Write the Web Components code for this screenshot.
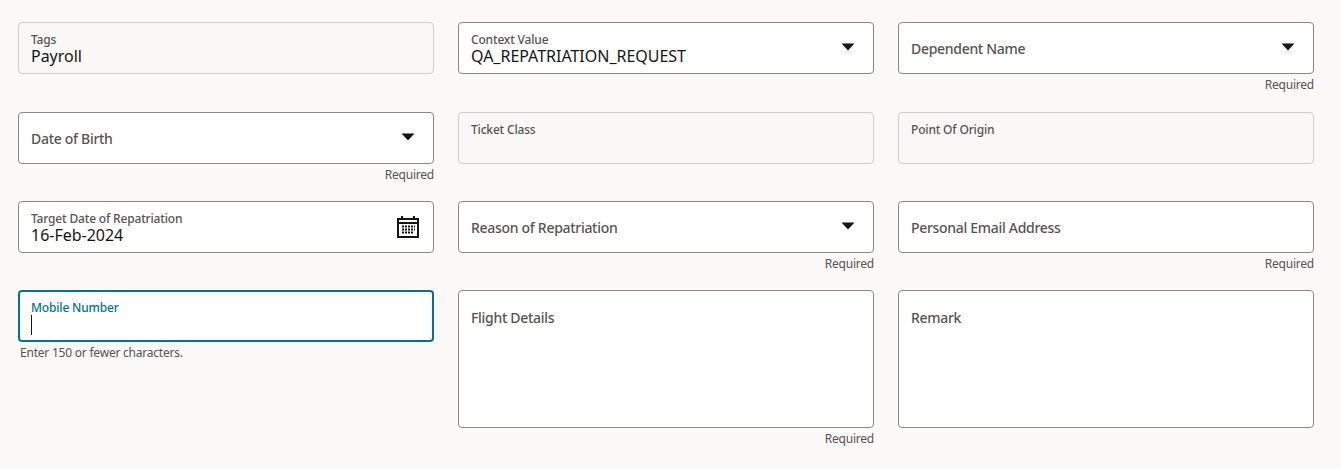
<!DOCTYPE html>
<html lang="en">
<head>
<meta charset="utf-8">
<title>Repatriation form</title>
<style>
    html, body { margin: 0; background: #fbf9f8; }
    body { font-family: "Noto Sans", "Open Sans", sans-serif; color: #161513; }
</style>
</head>
<body>
<form-grid>
    <form-field label="Tags" readonly>Payroll</form-field>
    <form-field label="Context Value" type="select">QA_REPATRIATION_REQUEST</form-field>
    <form-field label="Dependent Name" type="select" required></form-field>

    <form-field label="Date of Birth" type="select" required></form-field>
    <form-field label="Ticket Class" readonly></form-field>
    <form-field label="Point Of Origin" readonly></form-field>

    <form-field label="Target Date of Repatriation" type="date">16-Feb-2024</form-field>
    <form-field label="Reason of Repatriation" type="select" required></form-field>
    <form-field label="Personal Email Address" required></form-field>

    <form-field label="Mobile Number" focused>
        <span slot="help">Enter 150 or fewer characters.</span>
    </form-field>
    <form-field label="Flight Details" type="area" required></form-field>
    <form-field label="Remark" type="area"></form-field>
</form-grid>

<template id="grid-template">
<style>
    :host {
        display: grid;
        grid-template-columns: repeat(3, 416px);
        grid-template-rows: 90px 89px 89px auto;
        column-gap: 24px;
        padding: 22px 0 0 18px;
    }
</style>
<slot></slot>
</template>

<template id="field-template">
<style>
    :host {
        display: block;
        font-family: "Noto Sans", "Open Sans", sans-serif;
    }
    .box {
        position: relative;
        box-sizing: border-box;
        height: 52px;
        padding: 0 12px;
        display: flex;
        flex-direction: column;
        justify-content: center;
        background: #fff;
        border: 1px solid #8b8885;
        border-radius: 4px;
    }
    .label {
        font-size: 14px;
        line-height: 18px;
        font-weight: 500;
        letter-spacing: -0.3px;
        color: #565451;
        margin-top: 1px;
    }
    .value {
        font-size: 16px;
        line-height: 18px;
        letter-spacing: -0.02px;
        color: #161513;
    }
    :host([readonly]) .box {
        background: #f9f8f6;
        border-color: #d0cdca;
    }
    :host([type="area"]) .box {
        height: 138px;
        justify-content: flex-start;
        padding-top: 17px;
    }
    /* floated label once there is a value */
    .box.floated { justify-content: flex-start; padding-top: 10px; }
    .box.floated .label {
        font-size: 12px;
        line-height: 14px;
        letter-spacing: -0.17px;
        margin-top: 0;
    }
    :host([focused]) .box {
        border: 2px solid #04718f;
        padding: 9px 11px 0;
    }
    :host([focused]) .label { color: #04718f; }
    .caret {
        width: 1px;
        height: 20px;
        background: #161513;
    }
    .icon {
        position: absolute;
        right: 14px;
        top: 50%;
        transform: translateY(-50%);
        display: block;
    }
    .msg {
        display: flex;
        justify-content: space-between;
        font-size: 12px;
        line-height: 16px;
        letter-spacing: -0.22px;
        color: #565451;
        padding: 3px 0 0 2px;
    }
    .req { margin-left: auto; }
</style>
<div class="box">
    <span class="label"></span>
    <span class="value"><slot></slot></span>
</div>
<div class="msg"><slot name="help"></slot></div>
</template>

<script>
    const ARROW_SVG = `<svg class="icon" width="14" height="8" viewBox="0 0 14 8" style="right:18px;margin-top:-1px"><path d="M0.5 0.5h13L7 7.5z" fill="#161513"/></svg>`;
    const CALENDAR_SVG = `<svg class="icon" style="right:14px" width="22" height="22" viewBox="0 0 22 22" fill="#161513">
        <path fill-rule="evenodd" d="M0 2h4V0h2v2h10V0h2v2h4v20H0zM2 4v2h18V4zm0 4v12h18V8z"/>
        <path d="M5 9.500h2v2H5zM8 9.500h2v2H8zM11 9.500h2v2h-2zM14 9.500h2v2h-2zM17 9.500h1v2h-1zM5 12.500h2v2H5zM8 12.500h2v2H8zM11 12.500h2v2h-2zM14 12.500h2v2h-2zM17 12.500h1v2h-1zM5 15.500h2v2H5zM8 15.500h2v2H8zM11 15.500h2v2h-2zM14 15.500h2v2h-2z"/>
    </svg>`;

    class FormGrid extends HTMLElement {
        constructor() {
            super();
            this.attachShadow({ mode: 'open' });
            this.shadowRoot.appendChild(document.getElementById('grid-template').content.cloneNode(true));
        }
    }

    class FormField extends HTMLElement {
        constructor() {
            super();
            this.attachShadow({ mode: 'open' });
            this.shadowRoot.appendChild(document.getElementById('field-template').content.cloneNode(true));
        }

        connectedCallback() {
            const box = this.shadowRoot.querySelector('.box');
            const type = this.getAttribute('type');
            this.shadowRoot.querySelector('.label').textContent = this.getAttribute('label');

            // the label floats up when the field holds a value, is focused or is read only
            const hasValue = this.childNodes.length > 0 && this.textContent.trim() !== '' && !this.querySelector('[slot]');
            if (hasValue || this.hasAttribute('focused') || this.hasAttribute('readonly')) {
                box.classList.add('floated');
            }
            if (type === 'select') box.insertAdjacentHTML('beforeend', ARROW_SVG);
            if (type === 'date') box.insertAdjacentHTML('beforeend', CALENDAR_SVG);
            if (this.hasAttribute('focused')) {
                box.querySelector('.value').insertAdjacentHTML('beforeend', '<div class="caret"></div>');
            }
            if (this.hasAttribute('required')) {
                this.shadowRoot.querySelector('.msg').insertAdjacentHTML('beforeend', '<span class="req">Required</span>');
            }
        }
    }

    customElements.define('form-grid', FormGrid);
    customElements.define('form-field', FormField);
</script>
</body>
</html>
